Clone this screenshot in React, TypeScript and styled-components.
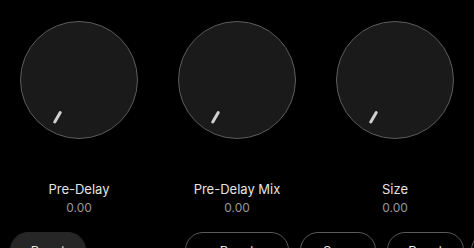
import React from "react";
import styled, { createGlobalStyle } from "styled-components";

const Global = createGlobalStyle`
  html, body { margin: 0; padding: 0; background: #000; }
  body { font-family: Inter, "Noto Sans", sans-serif; color: #e6e6e6; }
  * { box-sizing: border-box; }
`;

const Panel = styled.div`
  width: 474px;
  height: 248px;
  overflow: hidden;
  background: #000;
  padding-top: 21px;
`;

const KnobGrid = styled.div`
  display: grid;
  grid-template-columns: repeat(3, 158px);
`;

const Column = styled.div`
  display: flex;
  flex-direction: column;
  align-items: center;
`;

const KnobBody = styled.div`
  position: relative;
  width: 118px;
  height: 118px;
  border-radius: 50%;
  background: #1a1a1a;
  border: 1.5px solid #5c5c5c;
`;

const Indicator = styled.svg`
  position: absolute;
  inset: -1.5px;
  width: 118px;
  height: 118px;
`;

const Label = styled.div`
  margin-top: 42px;
  font-size: 13px;
  line-height: 16px;
  color: #e4e4e4;
`;

const Value = styled.div`
  margin-top: 3px;
  font-size: 12px;
  line-height: 16px;
  color: #9a9a9a;
`;

const ButtonRow = styled.div`
  display: flex;
  gap: 11px;
  margin-top: 16px;
  padding-left: 10px;
  white-space: nowrap;
`;

const Pill = styled.button<{ $w: number; $active?: boolean; $offset?: number }>`
  flex: 0 0 auto;
  width: ${(p) => p.$w}px;
  height: 37px;
  margin-left: ${(p) => p.$offset ?? 0}px;
  border-radius: 18px;
  border: 1px solid ${(p) => (p.$active ? "#262626" : "#5a5a5a")};
  background: ${(p) => (p.$active ? "#262626" : "transparent")};
  color: #e4e4e4;
  font-family: Inter, "Noto Sans", sans-serif;
  font-size: 13px;
  padding: 0;
`;

function Knob({ angle }: { angle: number }) {
  const rad = (angle * Math.PI) / 180;
  const dx = Math.sin(rad);
  const dy = -Math.cos(rad);
  const c = 59;
  return (
    <KnobBody>
      <Indicator viewBox="0 0 118 118">
        <line
          x1={c + dx * 37.5}
          y1={c + dy * 37.5}
          x2={c + dx * 48.5}
          y2={c + dy * 48.5}
          stroke="#cfcfcf"
          strokeWidth={3}
          strokeLinecap="round"
        />
      </Indicator>
    </KnobBody>
  );
}

const params = [
  { label: "Pre-Delay", value: "0.00" },
  { label: "Pre-Delay Mix", value: "0.00" },
  { label: "Size", value: "0.00" },
];

export default function App() {
  return (
    <>
      <Global />
      <Panel>
        <KnobGrid>
          {params.map((p) => (
            <Column key={p.label}>
              <Knob angle={-150} />
              <Label>{p.label}</Label>
              <Value>{p.value}</Value>
            </Column>
          ))}
        </KnobGrid>
        <ButtonRow>
          <Pill $w={76} $active>Reset</Pill>
          <Pill $w={104} $offset={88}>Reset</Pill>
          <Pill $w={76}>Save</Pill>
          <Pill $w={77}>Reset</Pill>
          <Pill $w={77} $offset={-4}>Reset</Pill>
        </ButtonRow>
      </Panel>
    </>
  );
}
